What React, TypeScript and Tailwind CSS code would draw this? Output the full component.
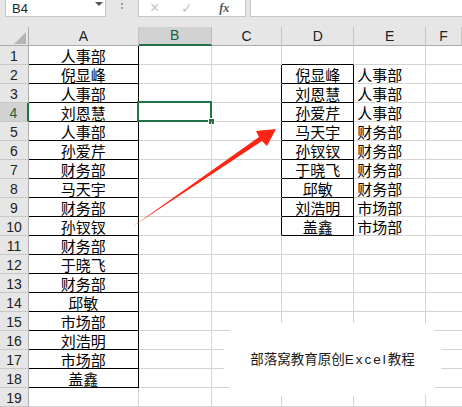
import React from "react";

const CJK = { fontFamily: '"Noto Sans CJK SC", "Noto Sans", sans-serif' };
const LAT = { fontFamily: '"Liberation Sans", Arial, sans-serif' };

const colA = [
  "人事部", "倪显峰", "人事部", "刘恩慧", "人事部", "孙爱芹", "财务部", "马天宇", "财务部",
  "孙钗钗", "财务部", "于晓飞", "财务部", "邱敏", "市场部", "刘浩明", "市场部", "盖鑫",
];

// rows 2..10
const colD = ["倪显峰", "刘恩慧", "孙爱芹", "马天宇", "孙钗钗", "于晓飞", "邱敏", "刘浩明", "盖鑫"];
const colE = ["人事部", "人事部", "人事部", "财务部", "财务部", "财务部", "财务部", "市场部", "市场部"];

const letters = ["A", "B", "C", "D", "E", "F"];
const widths = ["w-[110px]", "w-[73px]", "w-[71px]", "w-[72px]", "w-[72px]", "w-[36px]"];

const FormulaBar = () => (
  <div className="h-[27px] bg-[#e6e6e6] flex">
    <div className="ml-[5px] w-[101px] h-[17px] bg-white border border-t-0 border-[#c6c6c6] flex items-center pl-[6px] relative">
      <span className="text-[13px] leading-none text-[#222]" style={LAT}>B4</span>
      <svg className="absolute left-[89px] top-[2px]" width="8" height="4" viewBox="0 0 8 4">
        <path d="M0 0 L8 0 L4 4 Z" fill="#555" />
      </svg>
    </div>
    <div className="w-[32px] flex flex-col items-center pt-[3px] gap-[2px]">
      <div className="w-[2px] h-[2px] bg-[#9a9a9a]" />
      <div className="w-[2px] h-[2px] bg-[#9a9a9a]" />
    </div>
    <div className="w-[108px] h-[17px] bg-white border border-t-0 border-[#c6c6c6] flex items-center text-[#c4c4c4]">
      <span className="ml-[11px] text-[16px] leading-none" style={LAT}>×</span>
      <span className="ml-[22px] text-[14px] leading-none" style={LAT}>✓</span>
      <span className="ml-[26px] text-[12px] leading-none italic font-bold text-[#555]" style={{ fontFamily: '"Liberation Serif", serif' }}>fx</span>
    </div>
    <div className="ml-[4px] flex-1 h-[17px] bg-white border border-t-0 border-r-0 border-[#c6c6c6]" />
  </div>
);

const HeaderRow = () => (
  <div className="flex h-[19px]">
    <div className="w-[29px] bg-[#e6e6e6] border-r border-b border-[#ababab] flex items-end justify-end pr-[2px] pb-[1px]">
      <svg width="12" height="12" viewBox="0 0 12 12">
        <path d="M12 0 L12 12 L0 12 Z" fill="#b5b5b5" />
      </svg>
    </div>
    {letters.map((l, i) =>
      l === "B" ? (
        <div key={l} className={`${widths[i]} bg-[#d2d2d2] border-r border-[#bdbdbd] border-b-2 border-b-[#217346] flex items-center justify-center text-[14px] text-[#1e5e3b]`} style={LAT}>
          {l}
        </div>
      ) : (
        <div key={l} className={`${widths[i]} bg-[#e6e6e6] border-r border-[#c4c4c4] border-b border-b-[#ababab] flex items-center justify-center text-[14px] text-[#222]`} style={LAT}>
          {l}
        </div>
      )
    )}
  </div>
);

const RowHeader = ({ n }: { n: number }) =>
  n === 4 ? (
    <div className="w-[29px] bg-[#d2d2d2] border-r-2 border-r-[#217346] border-b border-[#c8c8c8] flex items-end justify-center text-[14px] leading-none pb-[1px] text-[#1e5e3b]" style={LAT}>
      {n}
    </div>
  ) : (
    <div className="w-[29px] bg-[#e6e6e6] border-r border-r-[#ababab] border-b border-[#c8c8c8] flex items-end justify-center text-[14px] leading-none pb-[1px] text-[#222]" style={LAT}>
      {n}
    </div>
  );

const Row = ({ n }: { n: number }) => {
  const a = colA[n - 1];
  const inD = n >= 2 && n <= 10;
  const d = inD ? colD[n - 2] : "";
  const e = inD ? colE[n - 2] : "";
  return (
    <div className="flex h-[19px]">
      <RowHeader n={n} />
      <div
        className={`w-[110px] flex items-end justify-center text-[15px] leading-none pb-[1px] text-black border-r border-b ${a ? "border-black" : "border-r-[#d4d4d4] border-b-[#d4d4d4]"}`}
        style={CJK}
      >
        {a}
      </div>
      <div className="w-[73px] border-r border-b border-[#d4d4d4] relative">
        {n === 4 && (
          <>
            <div className="absolute -left-[2px] -top-[2px] -right-[1px] -bottom-[1px] border-2 border-[#217346]" />
            <div className="absolute -right-[4px] -bottom-[4px] w-[7px] h-[7px] bg-[#217346] border border-white" />
          </>
        )}
      </div>
      <div className={`w-[71px] border-r border-b border-b-[#d4d4d4] ${inD ? "border-r-black" : "border-r-[#d4d4d4]"}`} />
      <div
        className={`w-[72px] flex items-end justify-center text-[15px] leading-none pb-[1px] text-black border-r border-b ${
          inD ? "border-black" : n === 1 ? "border-r-[#d4d4d4] border-b-black" : "border-[#d4d4d4]"
        }`}
        style={CJK}
      >
        {d}
      </div>
      <div className="w-[72px] flex items-end pl-[3px] text-[15px] leading-none pb-[1px] text-black border-r border-b border-[#d4d4d4]" style={CJK}>
        {e}
      </div>
      <div className="w-[36px] border-b border-[#d4d4d4]" />
    </div>
  );
};

export default function App() {
  const rows = Array.from({ length: 19 }, (_, i) => i + 1);
  return (
    <div className="w-[462px] h-[407px] bg-white overflow-hidden relative">
      <FormulaBar />
      <HeaderRow />
      {rows.map((n) => (
        <Row key={n} n={n} />
      ))}

      {/* red arrow */}
      <svg className="absolute left-0 top-0 pointer-events-none" width="462" height="407" viewBox="0 0 462 407">
        <path d="M132 227 L259 137 L256 131 L276 129 L267 146 L262 141 Z" fill="#ff2414" />
      </svg>

      {/* watermark */}
      <div className="absolute left-[224px] top-[323px] w-[217px] h-[73px] bg-white rounded-[24px] flex items-center justify-center">
        <span className="text-[13.5px] text-[#1a1a1a]" style={CJK}>
          部落窝教育原创<span className="tracking-[2px]" style={LAT}>Excel</span>教程
        </span>
      </div>
    </div>
  );
}
